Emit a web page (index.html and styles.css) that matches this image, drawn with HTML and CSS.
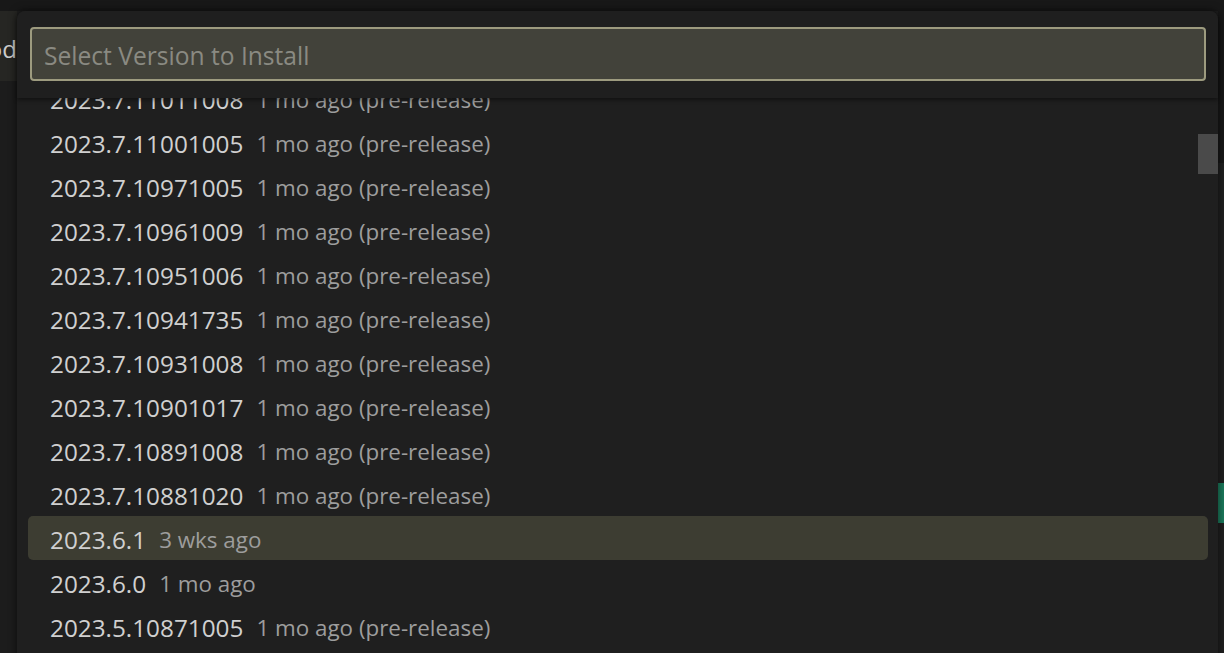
FILE: index.html
```html
<!DOCTYPE html>
<html>
<head>
<meta charset="utf-8">
<link rel="stylesheet" href="styles.css">
</head>
<body>
<div class="workbench">
  <div class="titlebar"></div>
  <div class="main">
    <div class="side">
      <div class="side-head"><span class="side-text">Good</span></div>
      <div class="side-body"></div>
    </div>
    <div class="editor"></div>
    <div class="right-edge">
      <div class="edge-top"></div>
      <div class="edge-mid"></div>
      <div class="edge-tag"></div>
      <div class="edge-rest"></div>
    </div>
  </div>
</div>

<div class="quick-pick">
  <div class="qp-header">
    <div class="qp-input">Select Version to Install</div>
  </div>
  <div class="qp-list">
    <div class="qp-rows">
      <div class="row"><span class="label">2023.7.11011008</span><span class="desc">1 mo ago (pre-release)</span></div>
      <div class="row"><span class="label">2023.7.11001005</span><span class="desc">1 mo ago (pre-release)</span></div>
      <div class="row"><span class="label">2023.7.10971005</span><span class="desc">1 mo ago (pre-release)</span></div>
      <div class="row"><span class="label">2023.7.10961009</span><span class="desc">1 mo ago (pre-release)</span></div>
      <div class="row"><span class="label">2023.7.10951006</span><span class="desc">1 mo ago (pre-release)</span></div>
      <div class="row"><span class="label">2023.7.10941735</span><span class="desc">1 mo ago (pre-release)</span></div>
      <div class="row"><span class="label">2023.7.10931008</span><span class="desc">1 mo ago (pre-release)</span></div>
      <div class="row"><span class="label">2023.7.10901017</span><span class="desc">1 mo ago (pre-release)</span></div>
      <div class="row"><span class="label">2023.7.10891008</span><span class="desc">1 mo ago (pre-release)</span></div>
      <div class="row"><span class="label">2023.7.10881020</span><span class="desc">1 mo ago (pre-release)</span></div>
      <div class="row selected"><span class="label">2023.6.1</span><span class="desc">3 wks ago</span></div>
      <div class="row"><span class="label">2023.6.0</span><span class="desc">1 mo ago</span></div>
      <div class="row"><span class="label">2023.5.10871005</span><span class="desc">1 mo ago (pre-release)</span></div>
      <div class="row"><span class="label">2023.5.10861004</span><span class="desc">1 mo ago (pre-release)</span></div>
    </div>
    <div class="scrollbar"></div>
  </div>
</div>
</body>
</html>
```

FILE: styles.css
```css
html, body {
  margin: 0;
  padding: 0;
  width: 1224px;
  height: 653px;
  overflow: hidden;
  background: #181818;
  font-family: "Open Sans", "Noto Sans", sans-serif;
}

.workbench {
  display: flex;
  flex-direction: column;
  height: 653px;
}

.titlebar {
  height: 11px;
  background: #181818;
}

.main {
  flex: 1;
  display: flex;
}

.side {
  width: 17px;
  display: flex;
  flex-direction: column;
}

.side-head {
  height: 70px;
  background: #262623;
  display: flex;
  justify-content: flex-end;
  align-items: center;
  overflow: hidden;
  padding-top: 4px;
  box-sizing: border-box;
}

.side-text {
  color: #cccccc;
  font-size: 24px;
  white-space: nowrap;
}

.side-body {
  flex: 1;
  background: #1c1c1c;
}

.editor {
  flex: 1;
  background: #1f1f1f;
}

.right-edge {
  width: 6px;
  display: flex;
  flex-direction: column;
}

.edge-top {
  height: 152px;
  background: #181818;
}

.edge-mid {
  height: 320px;
  background: #1f1f1f;
}

.edge-tag {
  height: 40px;
  background: #1b7a5c;
}

.edge-rest {
  flex: 1;
  background: #1f1f1f;
}

.quick-pick {
  position: absolute;
  left: 17px;
  top: 11px;
  width: 1201px;
  height: 660px;
  background: #1f1f1f;
  border-radius: 8px 8px 0 0;
  box-shadow: 0 0 8px rgba(0, 0, 0, 0.6);
  display: flex;
  flex-direction: column;
}

.qp-header {
  padding: 16px 12px 17px 13px;
  box-shadow: 0 2px 4px rgba(0, 0, 0, 0.45);
  position: relative;
  z-index: 2;
  background: #1f1f1f;
  border-radius: 8px 8px 0 0;
}

.qp-input {
  height: 54px;
  box-sizing: border-box;
  background: #42423a;
  border: 2px solid #9d9b7f;
  border-radius: 4px;
  color: #8a8a82;
  font-size: 24.6px;
  display: flex;
  align-items: center;
  padding-left: 12px;
  padding-top: 3px;
}

.qp-list {
  flex: 1;
  overflow: hidden;
  position: relative;
  padding: 0 10px 0 11px;
}

.qp-rows {
  margin-top: -22px;
  display: flex;
  flex-direction: column;
}

.row {
  height: 44px;
  display: flex;
  align-items: center;
  padding-left: 22px;
  border-radius: 5px;
  white-space: nowrap;
  padding-top: 2px;
  box-sizing: border-box;
}

.row.selected {
  background: #3d3d32;
}

.label {
  color: #d0d0d0;
  font-size: 24.3px;
}

.desc {
  color: #9d9d9d;
  font-size: 22.4px;
  margin-left: 13px;
}

.scrollbar {
  position: absolute;
  right: 0;
  top: 36px;
  width: 20px;
  height: 40px;
  background: #4a4a4a;
}
```
